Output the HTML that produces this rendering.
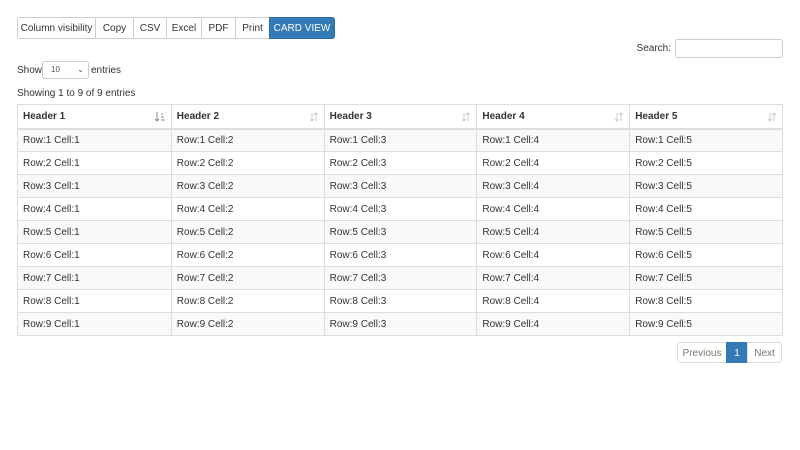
<!DOCTYPE html>
<html><head><meta charset="utf-8"><style>
*{box-sizing:border-box;margin:0;padding:0}
body{width:800px;height:450px;background:#fff;font-family:"Liberation Sans",sans-serif;font-size:10px;color:#333;position:relative;overflow:hidden}
.btns{position:absolute;left:17px;top:17px;height:22px;display:flex}
.btns div{height:22px;line-height:22px;border:1px solid #ccc;margin-left:-1px;text-align:center;background:#fff;color:#333}
.btns div:first-child{margin-left:0;border-radius:3px 0 0 3px}
.btns .cv{background:#337ab7;border-color:#2e6da4;color:#fff;border-radius:0 3px 3px 0}
.search{position:absolute;right:129px;top:39px;height:19px;line-height:19px}
.sbox{position:absolute;left:675px;top:39px;width:108px;height:19px;border:1px solid #ccc;border-radius:3px}
.show{position:absolute;left:17px;top:61px;height:18px;line-height:19px}
.sel{position:absolute;left:42px;top:61px;width:47px;height:18px;border:1px solid #ccc;border-radius:3px;font-size:8px;line-height:16px;padding-left:8px;color:#555}
.sel i{position:absolute;right:4px;top:0;font-style:normal;font-size:8px}
.ent{position:absolute;left:91px;top:61px;line-height:19px}
.info{position:absolute;left:17px;top:88px}
table{position:absolute;left:17px;top:104px;width:766px;border-collapse:collapse}
td,th{border:1px solid #ddd;height:23px;padding:0 5px;text-align:left;font-weight:normal;white-space:nowrap}
th{font-weight:bold;height:24px;border-bottom:2px solid #ddd;position:relative}
th svg{position:absolute;right:6px;top:7px}
tr.o td{background:#f9f9f9}
.pg{position:absolute;top:342px;height:21px;display:flex;right:18px}
.pg div{height:21px;line-height:21px;border:1px solid #ddd;margin-left:-1px;padding:0 6px;color:#777}
.pg .a{background:#337ab7;border-color:#337ab7;color:#fff;width:22px;padding:0;text-align:center}
.pg div:first-child{border-radius:3px 0 0 3px;margin-left:0;width:50px;text-align:center;padding:0}
.pg div:last-child{border-radius:0 3px 3px 0;width:35px;text-align:center;padding:0}
</style></head><body>
<div class="btns">
<div style="width:79px">Column visibility</div><div style="width:39px">Copy</div><div style="width:34px">CSV</div><div style="width:36px">Excel</div><div style="width:35px">PDF</div><div style="width:35px">Print</div><div class="cv" style="width:66px">CARD VIEW</div>
</div>
<div class="search">Search:</div>
<div class="sbox"></div>
<div class="show">Show</div>
<div class="sel">10<i>&#8964;</i></div>
<div class="ent">entries</div>
<div class="info">Showing 1 to 9 of 9 entries</div>
<table>
<colgroup><col style="width:154px"><col style="width:153px"><col style="width:153px"><col style="width:153px"><col style="width:153px"></colgroup>
<tr>
<th>Header 1<svg width="10" height="10"><path d="M2 0v9M0 7l2 2 2-2" stroke="#888" fill="none"/><path d="M6 2h2M6 5h3M6 8h4" stroke="#888"/></svg></th>
<th>Header 2<svg width="8" height="10"><path d="M2 1v8M0 7l2 2 2-2M6 1v8M4 3l2-2 2 2" stroke="#ccc" fill="none"/></svg></th>
<th>Header 3<svg width="8" height="10"><path d="M2 1v8M0 7l2 2 2-2M6 1v8M4 3l2-2 2 2" stroke="#ccc" fill="none"/></svg></th>
<th>Header 4<svg width="8" height="10"><path d="M2 1v8M0 7l2 2 2-2M6 1v8M4 3l2-2 2 2" stroke="#ccc" fill="none"/></svg></th>
<th>Header 5<svg width="8" height="10"><path d="M2 1v8M0 7l2 2 2-2M6 1v8M4 3l2-2 2 2" stroke="#ccc" fill="none"/></svg></th>
</tr>
<tr class="o"><td>Row:1 Cell:1</td><td>Row:1 Cell:2</td><td>Row:1 Cell:3</td><td>Row:1 Cell:4</td><td>Row:1 Cell:5</td></tr>
<tr><td>Row:2 Cell:1</td><td>Row:2 Cell:2</td><td>Row:2 Cell:3</td><td>Row:2 Cell:4</td><td>Row:2 Cell:5</td></tr>
<tr class="o"><td>Row:3 Cell:1</td><td>Row:3 Cell:2</td><td>Row:3 Cell:3</td><td>Row:3 Cell:4</td><td>Row:3 Cell:5</td></tr>
<tr><td>Row:4 Cell:1</td><td>Row:4 Cell:2</td><td>Row:4 Cell:3</td><td>Row:4 Cell:4</td><td>Row:4 Cell:5</td></tr>
<tr class="o"><td>Row:5 Cell:1</td><td>Row:5 Cell:2</td><td>Row:5 Cell:3</td><td>Row:5 Cell:4</td><td>Row:5 Cell:5</td></tr>
<tr><td>Row:6 Cell:1</td><td>Row:6 Cell:2</td><td>Row:6 Cell:3</td><td>Row:6 Cell:4</td><td>Row:6 Cell:5</td></tr>
<tr class="o"><td>Row:7 Cell:1</td><td>Row:7 Cell:2</td><td>Row:7 Cell:3</td><td>Row:7 Cell:4</td><td>Row:7 Cell:5</td></tr>
<tr><td>Row:8 Cell:1</td><td>Row:8 Cell:2</td><td>Row:8 Cell:3</td><td>Row:8 Cell:4</td><td>Row:8 Cell:5</td></tr>
<tr class="o"><td>Row:9 Cell:1</td><td>Row:9 Cell:2</td><td>Row:9 Cell:3</td><td>Row:9 Cell:4</td><td>Row:9 Cell:5</td></tr>
</table>
<div class="pg"><div>Previous</div><div class="a">1</div><div>Next</div></div>
</body></html>
